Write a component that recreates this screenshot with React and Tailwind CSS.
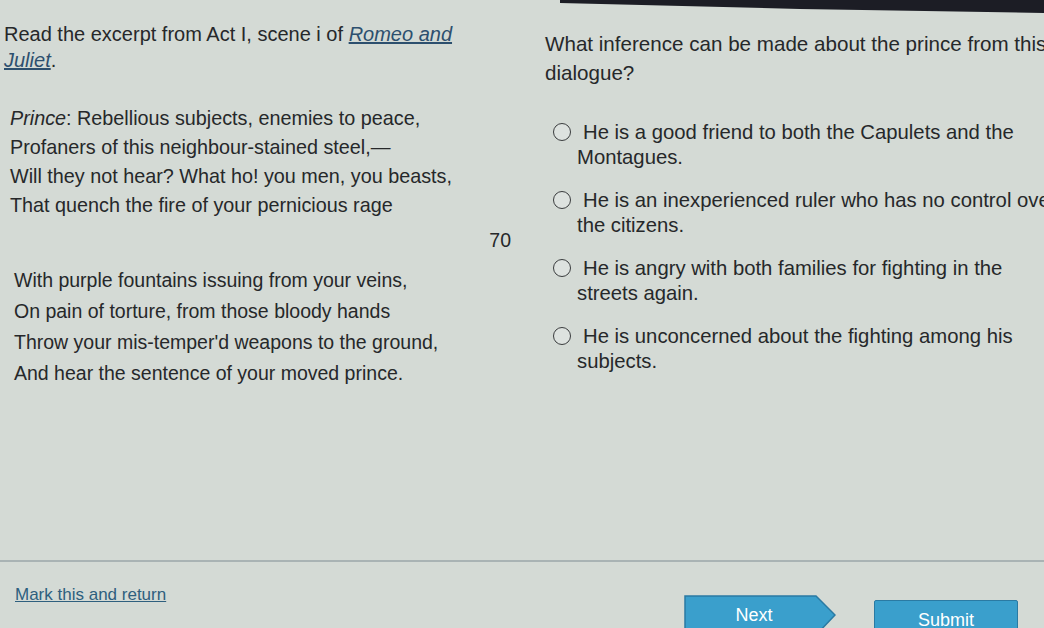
import React from "react";

const options = [
  ["He is a good friend to both the Capulets and the", "Montagues."],
  ["He is an inexperienced ruler who has no control over", "the citizens."],
  ["He is angry with both families for fighting in the", "streets again."],
  ["He is unconcerned about the fighting among his", "subjects."],
];

export default function App() {
  return (
    <div
      className="relative w-[1044px] h-[628px] overflow-hidden bg-[#d4dad5] text-[#26282a]"
      style={{ fontFamily: '"Liberation Sans", Arial, sans-serif' }}
    >
      {/* bezel strip at top right */}
      <svg className="absolute top-0 left-0" width="1044" height="14" viewBox="0 0 1044 14">
        <polygon points="560,0 1044,0 1044,13 800,9 560,3" fill="#1c1d25" />
      </svg>

      <div className="flex h-[560px]">
        {/* left column */}
        <div className="w-[535px] shrink-0 pl-[4px] pt-[21px]">
          <p className="text-[20px] leading-[26px] whitespace-nowrap">
            Read the excerpt from Act I, scene i of{" "}
            <span className="italic underline text-[#2c4f6e] decoration-[#2c4f6e]">Romeo and</span>
            <br />
            <span className="italic underline text-[#2c4f6e] decoration-[#2c4f6e]">Juliet</span>.
          </p>

          <div className="mt-[31px] pl-[6px] text-[19.8px] leading-[29px]">
            <p>
              <span className="italic">Prince</span>: Rebellious subjects, enemies to peace,
            </p>
            <p>Profaners of this neighbour-stained steel,—</p>
            <p>Will they not hear? What ho! you men, you beasts,</p>
            <p>That quench the fire of your pernicious rage</p>
          </div>
          <div className="flex justify-end pr-[24px] mt-[8px] text-[19.5px] leading-[24px]">70</div>
          <div className="mt-[13px] pl-[10px] text-[19.5px] leading-[31px]">
            <p>With purple fountains issuing from your veins,</p>
            <p>On pain of torture, from those bloody hands</p>
            <p>Throw your mis-temper'd weapons to the ground,</p>
            <p>And hear the sentence of your moved prince.</p>
          </div>
        </div>

        {/* right column */}
        <div className="flex-1 pt-[29px] pl-[10px] overflow-hidden">
          <p className="text-[20.6px] leading-[29px] whitespace-nowrap">
            What inference can be made about the prince from this
            <br />
            dialogue?
          </p>
          <div className="mt-[33px] flex flex-col gap-[18px] pl-[8px]">
            {options.map(([a, b], i) => (
              <div key={i} className="flex items-start gap-[12px]">
                <span className="mt-[3px] shrink-0 w-[18px] h-[18px] rounded-full border-[1.5px] border-[#3a3c3e] bg-[#dde2df]" />
                <div className="text-[20.3px] leading-[25px]">
                  <p className="whitespace-nowrap">{a}</p>
                  <p className="-ml-[6px]">{b}</p>
                </div>
              </div>
            ))}
          </div>
        </div>
      </div>

      {/* divider */}
      <div className="h-[2px] bg-[#a9b3b4]" />

      {/* footer */}
      <div className="flex items-start pt-[20px] px-[15px]">
        <a className="text-[17px] text-[#2e5f7e] underline decoration-[#2e5f7e]" href="#">
          Mark this and return
        </a>
        <div className="ml-auto flex gap-[38px] pr-[11px] pt-[13px]">
          <div className="relative w-[152px] h-[40px]">
            <svg className="absolute inset-0" width="152" height="40" viewBox="0 0 152 40">
              <polygon points="1,1 132,1 151,20 132,40 1,40" fill="#3a9fcc" stroke="#2a7aa3" strokeWidth="1.5" />
            </svg>
            <span className="absolute left-0 right-[12px] top-[7px] text-center text-white text-[18px]">Next</span>
          </div>
          <div className="relative w-[144px] h-[40px] mt-[5px] rounded-[2px] bg-[#3a9fcc] border border-[#2a7aa3]">
            <span className="absolute inset-x-0 top-[6px] text-center text-white text-[18px]">Submit</span>
          </div>
        </div>
      </div>
    </div>
  );
}
